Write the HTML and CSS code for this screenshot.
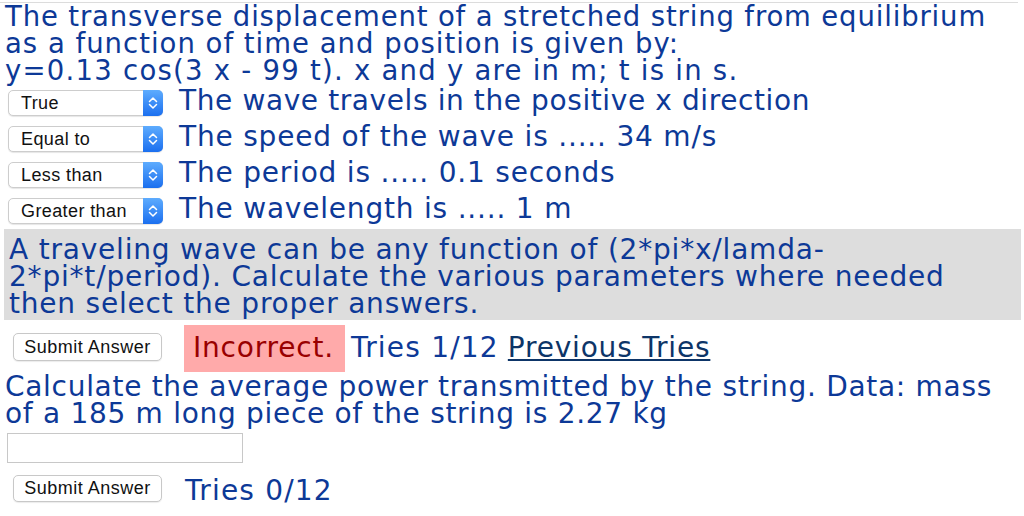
FILE: index.html
```html
<!DOCTYPE html>
<html>
<head>
<meta charset="utf-8">
<link rel="stylesheet" href="styles.css">
</head>
<body>
<div class="page">
  <div class="topline"></div>
  <p class="q">The transverse displacement of a stretched string from equilibrium<br><span class="l2">as a function of time and position is given by:</span><br><span class="l3">y=0.13 cos(3 x - 99 t). x and y are in m; t is in s.</span></p>
  <div class="rows">
    <div class="row">
      <div class="sel"><span class="sel-text">True</span><span class="sel-btn"><svg width="10" height="16" viewBox="0 0 10 16"><path d="M1.5 6.5 L5 3 L8.5 6.5 M1.5 9.5 L5 13 L8.5 9.5" fill="none" stroke="#fff" stroke-width="1.5" stroke-linecap="round" stroke-linejoin="round"/></svg></span></div>
      <span class="stmt stmt1">The wave travels in the positive x direction</span>
    </div>
    <div class="row">
      <div class="sel"><span class="sel-text">Equal to</span><span class="sel-btn"><svg width="10" height="16" viewBox="0 0 10 16"><path d="M1.5 6.5 L5 3 L8.5 6.5 M1.5 9.5 L5 13 L8.5 9.5" fill="none" stroke="#fff" stroke-width="1.5" stroke-linecap="round" stroke-linejoin="round"/></svg></span></div>
      <span class="stmt">The speed of the wave is ..... 34 m/s</span>
    </div>
    <div class="row">
      <div class="sel"><span class="sel-text">Less than</span><span class="sel-btn"><svg width="10" height="16" viewBox="0 0 10 16"><path d="M1.5 6.5 L5 3 L8.5 6.5 M1.5 9.5 L5 13 L8.5 9.5" fill="none" stroke="#fff" stroke-width="1.5" stroke-linecap="round" stroke-linejoin="round"/></svg></span></div>
      <span class="stmt">The period is ..... 0.1 seconds</span>
    </div>
    <div class="row">
      <div class="sel"><span class="sel-text">Greater than</span><span class="sel-btn"><svg width="10" height="16" viewBox="0 0 10 16"><path d="M1.5 6.5 L5 3 L8.5 6.5 M1.5 9.5 L5 13 L8.5 9.5" fill="none" stroke="#fff" stroke-width="1.5" stroke-linecap="round" stroke-linejoin="round"/></svg></span></div>
      <span class="stmt">The wavelength is ..... 1 m</span>
    </div>
  </div>
  <div class="hint">A traveling wave can be any function of (2*pi*x/lamda-<br>2*pi*t/period). Calculate the various parameters where needed<br>then select the proper answers.</div>
  <div class="submit-row">
    <button class="btn btn1">Submit Answer</button>
    <span class="incorrect">Incorrect.</span>
    <span class="tries tries1">Tries 1/12</span>
    <a class="prev" href="#">Previous Tries</a>
  </div>
  <p class="q2">Calculate the average power transmitted by the string. Data: mass<br>of a 185 m long piece of the string is 2.27 kg</p>
  <div class="answer"></div>
  <div class="submit-row2">
    <button class="btn">Submit Answer</button>
    <span class="tries tries0">Tries 0/12</span>
  </div>
</div>
</body>
</html>
```

FILE: styles.css
```css
html, body {
  margin: 0;
  padding: 0;
  background: #ffffff;
}
.page {
  width: 1024px;
  height: 516px;
  overflow: hidden;
  font-family: "DejaVu Sans", Verdana, sans-serif;
  font-size: 28px;
  letter-spacing: 0.8px;
  line-height: 27px;
  color: #0d3997;
}
.topline {
  height: 1px;
  background: #dcdcdc;
  margin: 2px 6px 0 0;
}
.q {
  margin: 0 0 0 5px;
  font-size: 27.5px;
  letter-spacing: 0.85px;
  white-space: nowrap;
}
.l2 {
  letter-spacing: 1px;
}
.l3 {
  letter-spacing: 1.25px;
}
.rows {
  display: flex;
  flex-direction: column;
  margin-top: 1px;
}
.row {
  display: flex;
  align-items: flex-start;
  height: 36px;
}
.sel {
  margin: 5px 0 0 8px;
  width: 155px;
  height: 26px;
  box-sizing: border-box;
  border: 1px solid #cdcdcd;
  border-radius: 5px;
  display: flex;
  align-items: stretch;
  background: #fff;
  box-shadow: 0 1px 1px rgba(0,0,0,0.10);
}
.sel-text {
  flex: 1;
  font-family: "Liberation Sans", Arial, sans-serif;
  font-size: 18px;
  letter-spacing: 0.4px;
  line-height: 24px;
  color: #111;
  padding-left: 12px;
  white-space: nowrap;
}
.sel-btn {
  width: 20px;
  background: linear-gradient(#5eacfe, #1b6fef);
  border-radius: 0 5px 5px 0;
  margin: -1px -1px -1px 0;
  display: flex;
  align-items: center;
  justify-content: center;
}
.stmt {
  margin: 2px 0 0 16px;
  white-space: nowrap;
}
.stmt1 {
  letter-spacing: 0.6px;
}
.hint {
  margin: 0 3px 0 4px;
  background: #dddddd;
  padding: 7px 0 3px 5px;
  white-space: nowrap;
}
.submit-row {
  display: flex;
  align-items: flex-start;
  height: 52px;
}
.btn {
  font-family: "Liberation Sans", Arial, sans-serif;
  font-size: 18px;
  letter-spacing: 0.5px;
  color: #111;
  background: #fff;
  border: 1px solid #c8c8c8;
  border-radius: 5px;
  width: 149px;
  height: 27px;
  padding: 0;
  margin-left: 13px;
  box-shadow: 0 1px 1px rgba(0,0,0,0.08);
}
.btn1 {
  margin-top: 13px;
  height: 28px;
}
.incorrect {
  background: #ffaaaa;
  color: #990000;
  margin: 5px 0 0 22px;
  padding: 9px 11px 11px 9px;
}
.tries {
  letter-spacing: 1.2px;
}
.tries1 {
  margin: 14px 0 0 6px;
}
.prev {
  color: #0d3568;
  text-decoration: underline;
  margin: 14px 0 0 9px;
}
.q2 {
  margin: 1px 0 0 5px;
  white-space: nowrap;
  letter-spacing: 0.7px;
}
.answer {
  margin: 6px 0 0 7px;
  width: 236px;
  height: 30px;
  box-sizing: border-box;
  border: 1px solid #c8c8c8;
  background: #fff;
}
.submit-row2 {
  display: flex;
  align-items: flex-start;
  margin-top: 12px;
}
.tries0 {
  margin: 2px 0 0 23px;
}
```
